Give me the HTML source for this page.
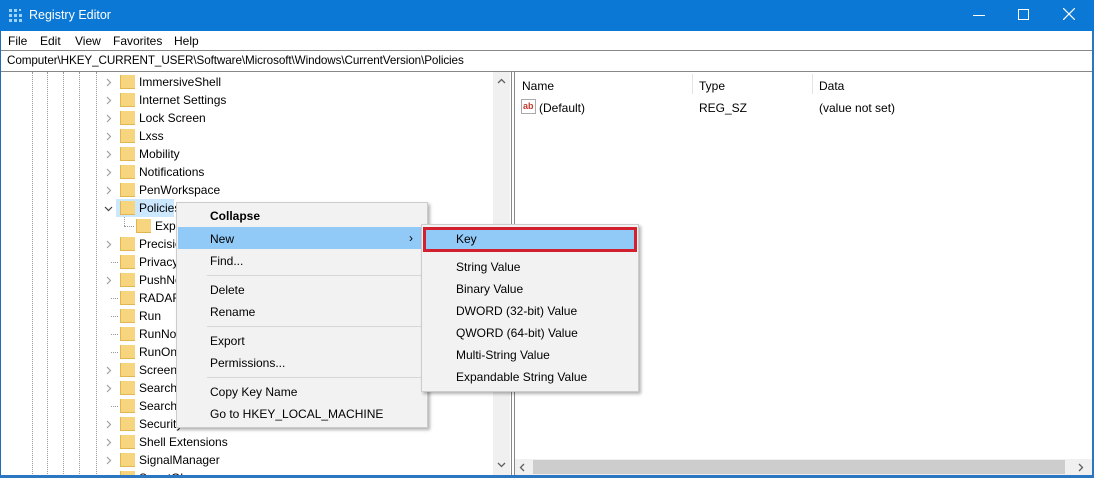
<!DOCTYPE html>
<html><head><meta charset="utf-8"><style>
*{margin:0;padding:0;box-sizing:border-box}
body{width:1094px;height:478px;overflow:hidden;font-family:"Liberation Sans",sans-serif;font-size:12px;color:#000;background:#fff;position:relative}
.a{position:absolute;white-space:nowrap}
.title{left:0;top:0;width:1094px;height:31px;background:#0a78d4;color:#fff}
.menu span{position:absolute;top:34px}
.fold{position:absolute;width:15px;height:14px;background:#f6d57e;border-left:1px solid #e1b64f;border-bottom:1px solid #e1b64f}
.vd{position:absolute;top:0;height:404px;width:0;border-left:1px dotted #999}
.cm{background:#f2f2f2;border:1px solid #ccc;box-shadow:2px 2px 3px rgba(0,0,0,.3)}
.mi{position:absolute;left:33px}
.sep{position:absolute;height:1px;background:#d7d7d7}
#tree{position:absolute;left:1px;top:72px;width:492px;height:403px;overflow:hidden}
#tree .a{margin-left:-1px}
</style></head><body>
<div class="a title">
 <svg class="a" style="left:9px;top:9px" width="13" height="13"><g fill="#9fd3ff"><rect x="0" y="0" width="3" height="3"/><rect x="5" y="0" width="3" height="3"/><rect x="0" y="5" width="3" height="3"/><rect x="5" y="5" width="3" height="3"/><rect x="10" y="5" width="3" height="3"/><rect x="0" y="10" width="3" height="3"/><rect x="5" y="10" width="3" height="3"/><rect x="10" y="10" width="3" height="3"/><rect x="10" y="0" width="2" height="2"/></g></svg>
 <span class="a" style="left:29px;top:8px;font-size:12.5px">Registry Editor</span>
 <div class="a" style="left:973px;top:15px;width:12px;height:1px;background:#fff"></div>
 <div class="a" style="left:1018px;top:9px;width:11px;height:11px;border:1px solid #fff"></div>
 <svg class="a" style="left:1063px;top:8px" width="12" height="12"><path d="M0 0L12 12M12 0L0 12" stroke="#fff" stroke-width="1.2"/></svg>
</div>
<div class="a" style="left:0;top:31px;width:1px;height:447px;background:#1e6fb8"></div>
<div class="a" style="left:1092px;top:31px;width:2px;height:447px;background:#2a76c0"></div>
<div class="a" style="left:0;top:475px;width:1094px;height:3px;background:#2a76c0"></div>
<div class="menu"><span style="left:8px">File</span><span style="left:40px">Edit</span><span style="left:75px">View</span><span style="left:113px">Favorites</span><span style="left:174px">Help</span></div>
<div class="a" style="left:1px;top:50px;width:1091px;height:22px;border-top:1px solid #888;border-bottom:1px solid #888;background:#fff"></div>
<span class="a" style="left:7px;top:54px;font-size:11.7px;letter-spacing:-0.1px">Computer\HKEY_CURRENT_USER\Software\Microsoft\Windows\CurrentVersion\Policies</span>
<div id="tree"></div>
<div class="a" style="left:493px;top:72px;width:17px;height:403px;background:#f0f0f0"></div>
<svg class="a" style="left:497px;top:78px" width="9" height="6"><path d="M1 5L4.5 1.5L8 5" stroke="#606060" fill="none" stroke-width="1.3"/></svg>
<svg class="a" style="left:497px;top:462px" width="9" height="6"><path d="M1 1L4.5 4.5L8 1" stroke="#606060" fill="none" stroke-width="1.3"/></svg>
<div class="a" style="left:511px;top:72px;width:4px;height:403px;border-left:1px solid #888;border-right:1px solid #888;background:#fff"></div>
<span class="a" style="left:522px;top:79px">Name</span>
<div class="a" style="left:692px;top:74px;width:1px;height:20px;background:#e5e5e5"></div>
<span class="a" style="left:699px;top:79px">Type</span>
<div class="a" style="left:812px;top:74px;width:1px;height:20px;background:#e5e5e5"></div>
<span class="a" style="left:819px;top:79px">Data</span>
<div class="a" style="left:521px;top:99px;width:15px;height:15px;border:1px solid #aaa;background:#fff;color:#c0392b;font-size:9px;font-weight:bold;line-height:12px;padding-left:1px">ab</div>
<span class="a" style="left:539px;top:101px">(Default)</span>
<span class="a" style="left:699px;top:101px">REG_SZ</span>
<span class="a" style="left:819px;top:101px">(value not set)</span>
<div class="a" style="left:515px;top:459px;width:577px;height:16px;background:#f0f0f0"></div>
<div class="a" style="left:533px;top:460px;width:532px;height:14px;background:#cdcdcd"></div>
<svg class="a" style="left:519px;top:463px" width="6" height="9"><path d="M5 1L1.5 4.5L5 8" stroke="#606060" fill="none" stroke-width="1.3"/></svg>
<svg class="a" style="left:1078px;top:463px" width="6" height="9"><path d="M1 1L4.5 4.5L1 8" stroke="#606060" fill="none" stroke-width="1.3"/></svg>
<div class="a cm" style="left:176px;top:202px;width:252px;height:226px">
 <div class="a" style="left:1px;top:24px;width:248px;height:22px;background:#91c9f7"></div>
 <span class="mi" style="top:6px;font-weight:bold">Collapse</span>
 <span class="mi" style="top:29px">New</span><span class="a" style="left:232px;top:28px">&#8250;</span>
 <span class="mi" style="top:51px">Find...</span>
 <div class="sep" style="left:30px;top:72px;width:218px"></div>
 <span class="mi" style="top:80px">Delete</span>
 <span class="mi" style="top:102px">Rename</span>
 <div class="sep" style="left:30px;top:123px;width:218px"></div>
 <span class="mi" style="top:131px">Export</span>
 <span class="mi" style="top:153px">Permissions...</span>
 <div class="sep" style="left:30px;top:174px;width:218px"></div>
 <span class="mi" style="top:182px">Copy Key Name</span>
 <span class="mi" style="top:204px">Go to HKEY_LOCAL_MACHINE</span>
</div>
<div class="a cm" style="left:421px;top:224px;width:218px;height:168px">
 <div class="a" style="left:1px;top:2px;width:214px;height:25px;background:#91c9f7;border:3px solid #d2202f"></div>
 <span class="mi" style="left:34px;top:7px">Key</span>
 <span class="mi" style="left:34px;top:35px">String Value</span>
 <span class="mi" style="left:34px;top:57px">Binary Value</span>
 <span class="mi" style="left:34px;top:79px">DWORD (32-bit) Value</span>
 <span class="mi" style="left:34px;top:101px">QWORD (64-bit) Value</span>
 <span class="mi" style="left:34px;top:123px">Multi-String Value</span>
 <span class="mi" style="left:34px;top:145px">Expandable String Value</span>
</div>
<script>
var rows=[["ImmersiveShell",1],["Internet Settings",1],["Lock Screen",1],["Lxss",1],["Mobility",1],["Notifications",1],["PenWorkspace",1],["Policies",2],["Explorer",3],["PrecisionTouchPad",1],["Privacy",0],["PushNotifications",1],["RADAR",0],["Run",0],["RunNotification",0],["RunOnce",0],["Screensavers",1],["Search",1],["SearchSettings",0],["Security and Maintenance",1],["Shell Extensions",1],["SignalManager",1],["SmartGlass",1]];
var h='<div class="vd" style="left:31px"></div><div class="vd" style="left:46px"></div><div class="vd" style="left:62px"></div><div class="vd" style="left:78px"></div><div class="vd" style="left:95px"></div>';
rows.forEach(function(r,i){var t=1+i*18,x=119,tx=139;
if(r[1]==3){x=135;tx=155;h+='<div class="a" style="left:124px;top:'+t+'px;width:1px;height:9px;border-left:1px dotted #999"></div><div class="a" style="left:124px;top:'+(t+9)+'px;width:10px;border-top:1px dotted #999"></div>';}
else if(r[1]==1)h+='<svg class="a" style="left:106px;top:'+(t+5)+'px" width="6" height="9"><path d="M1 1L4.5 4.5L1 8" stroke="#a0a0a0" fill="none" stroke-width="1.2"/></svg>';
else if(r[1]==2)h+='<div class="a" style="left:116px;top:'+t+'px;width:58px;height:18px;background:#cce8ff"></div><svg class="a" style="left:104px;top:'+(t+7)+'px" width="9" height="6"><path d="M1 1L4.5 4.5L8 1" stroke="#404040" fill="none" stroke-width="1.2"/></svg>';
else h+='<div class="a" style="left:111px;top:'+(t+9)+'px;width:7px;border-top:1px dotted #999"></div>';
h+='<div class="fold" style="left:'+x+'px;top:'+(t+2)+'px"></div><span class="a" style="left:'+tx+'px;top:'+(t+2)+'px">'+r[0]+'</span>';});
document.getElementById("tree").innerHTML=h;
</script>
</body></html>
